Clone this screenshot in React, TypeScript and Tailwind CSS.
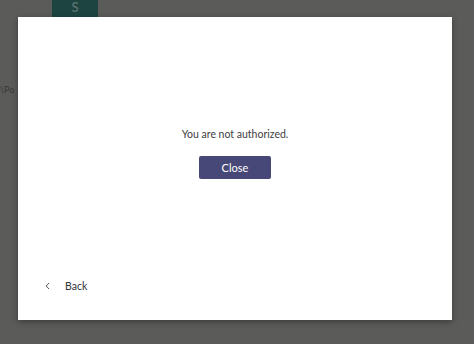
import React from "react";

export default function App() {
  const font = { fontFamily: 'Lato, "Open Sans", sans-serif' };
  return (
    <div className="relative w-[474px] h-[344px] overflow-hidden bg-[#5b5b59]" style={font}>
      {/* underlying page (dimmed) */}
      <div className="absolute left-[52px] top-0 w-[46px] h-[17px] bg-[#1d4440] flex items-start justify-center">
        <span className="text-[13px] leading-[14px] text-[#5c716e] font-semibold">S</span>
      </div>
      <div className="absolute left-0 top-[84px] text-[9px] leading-[12px] text-[#3a3a3a]">\Po</div>

      {/* dialog */}
      <div className="absolute left-[18px] top-[17px] w-[434px] h-[303px] bg-white shadow-[0_2px_6px_rgba(0,0,0,0.35)] flex flex-col">
        <div className="flex flex-col items-center pt-[111px]">
          <p className="text-[10.5px] leading-[13px] text-[#404040]">You are not authorized.</p>
          <button className="mt-[15px] w-[72px] h-[23px] rounded-[2px] bg-[#484878] text-white text-[11px] leading-[14px] flex items-center justify-center">
            Close
          </button>
        </div>
        <div className="mt-auto mb-[27px] flex items-center pl-[26px]">
          <svg width="8" height="10" viewBox="0 0 8 10" className="mr-[13px]">
            <path d="M5 2 L2.2 5 L5 8" fill="none" stroke="#555" strokeWidth="1" />
          </svg>
          <span className="text-[10.5px] leading-[14px] text-[#333]">Back</span>
        </div>
      </div>
    </div>
  );
}
